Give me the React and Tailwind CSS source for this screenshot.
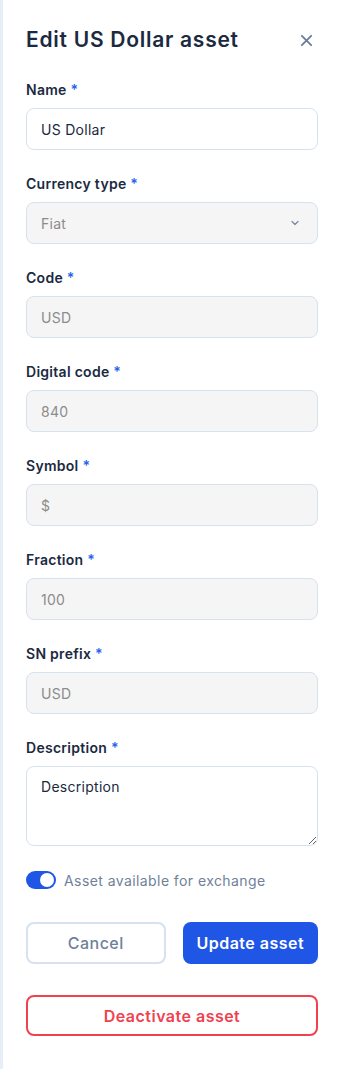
import { useState } from 'react';

const fields = [
  { label: 'Code', value: 'USD' },
  { label: 'Digital code', value: '840' },
  { label: 'Symbol', value: '$' },
  { label: 'Fraction', value: '100' },
  { label: 'SN prefix', value: 'USD' },
];

function Label({ children }) {
  return (
    <label className="block h-5 mb-2 text-[14px] leading-5 font-semibold tracking-[0.02em] text-[#1b2a41]">
      {children} <span className="text-[#2563eb]">*</span>
    </label>
  );
}

export default function App() {
  const [name, setName] = useState('US Dollar');
  const [description, setDescription] = useState('Description');
  const [available, setAvailable] = useState(true);

  return (
    <div className="min-h-screen bg-white flex" style={{ fontFamily: 'Inter, "Noto Sans", sans-serif' }}>
      <div className="w-[3px] bg-[#e6eefa] shrink-0" />
      <div className="flex-1 pl-[23px] pr-6 pt-[26px] pb-8">
        {/* Header */}
        <div className="flex items-center justify-between h-7 mb-[26px]">
          <h1 className="text-[21px] leading-7 font-semibold tracking-[0.035em] text-[#1b2a41]">Edit US Dollar asset</h1>
          <button className="w-6 h-6 flex items-center justify-center text-[#6b7f99]">
            <svg width="13" height="13" viewBox="0 0 14 14" fill="none" stroke="currentColor" strokeWidth="2" strokeLinecap="round">
              <path d="M2 2l10 10M12 2L2 12" />
            </svg>
          </button>
        </div>

        <div className="flex flex-col gap-6">
          <div>
            <Label>Name</Label>
            <input
              value={name}
              onChange={(e) => setName(e.target.value)}
              className="w-full h-[42px] px-[14px] rounded-lg border border-[#d6e2ee] bg-white text-[14px] tracking-[0.02em] text-[#1b2a41] outline-none"
            />
          </div>

          <div>
            <Label>Currency type</Label>
            <div className="w-full h-[42px] px-[14px] rounded-lg border border-[#d6e2ee] bg-[#f5f5f5] flex items-center justify-between">
              <span className="text-[14px] tracking-[0.02em] text-[#8c8c8c]">Fiat</span>
              <svg width="12" height="12" viewBox="0 0 12 12" fill="none" stroke="#7c8ba1" strokeWidth="1.3" strokeLinecap="round" strokeLinejoin="round" className="mr-[2px]">
                <path d="M3 4.5l3 3 3-3" />
              </svg>
            </div>
          </div>

          {fields.map((f) => (
            <div key={f.label}>
              <Label>{f.label}</Label>
              <input
                value={f.value}
                disabled
                readOnly
                className="w-full h-[42px] px-[14px] rounded-lg border border-[#d6e2ee] bg-[#f5f5f5] text-[14px] tracking-[0.02em] text-[#8c8c8c] outline-none"
              />
            </div>
          ))}

          <div>
            <Label>Description</Label>
            <textarea
              value={description}
              onChange={(e) => setDescription(e.target.value)}
              className="block w-full h-[80px] px-[14px] py-[10px] rounded-lg border border-[#d6e2ee] bg-white text-[14px] leading-5 tracking-[0.02em] text-[#1b2a41] outline-none"
            />
          </div>
        </div>

        {/* Toggle */}
        <div className="flex items-center gap-2 mt-[25px] h-[18px]">
          <button
            onClick={() => setAvailable(!available)}
            className={`w-[30px] h-[18px] rounded-full flex items-center px-[2px] ${available ? 'bg-[#1f56e6] justify-end' : 'bg-gray-300 justify-start'}`}
          >
            <span className="w-[14px] h-[14px] rounded-full bg-white" />
          </button>
          <span className="text-[14px] tracking-[0.03em] text-[#6f819a]">Asset available for exchange</span>
        </div>

        {/* Buttons */}
        <div className="flex gap-[17px] mt-[33px]">
          <button className="flex-1 h-[42px] rounded-lg border-2 border-[#d6e2ee] bg-white text-[16px] font-medium tracking-[0.03em] text-[#6f819a]">
            Cancel
          </button>
          <button className="flex-1 h-[42px] rounded-lg bg-[#1f56e6] text-[16px] font-semibold tracking-[0.03em] text-white">
            Update asset
          </button>
        </div>

        <button className="w-full h-[41px] mt-[31px] rounded-lg border-2 border-[#f0424e] bg-white text-[16px] font-semibold tracking-[0.03em] text-[#f0424e]">
          Deactivate asset
        </button>
      </div>
    </div>
  );
}
